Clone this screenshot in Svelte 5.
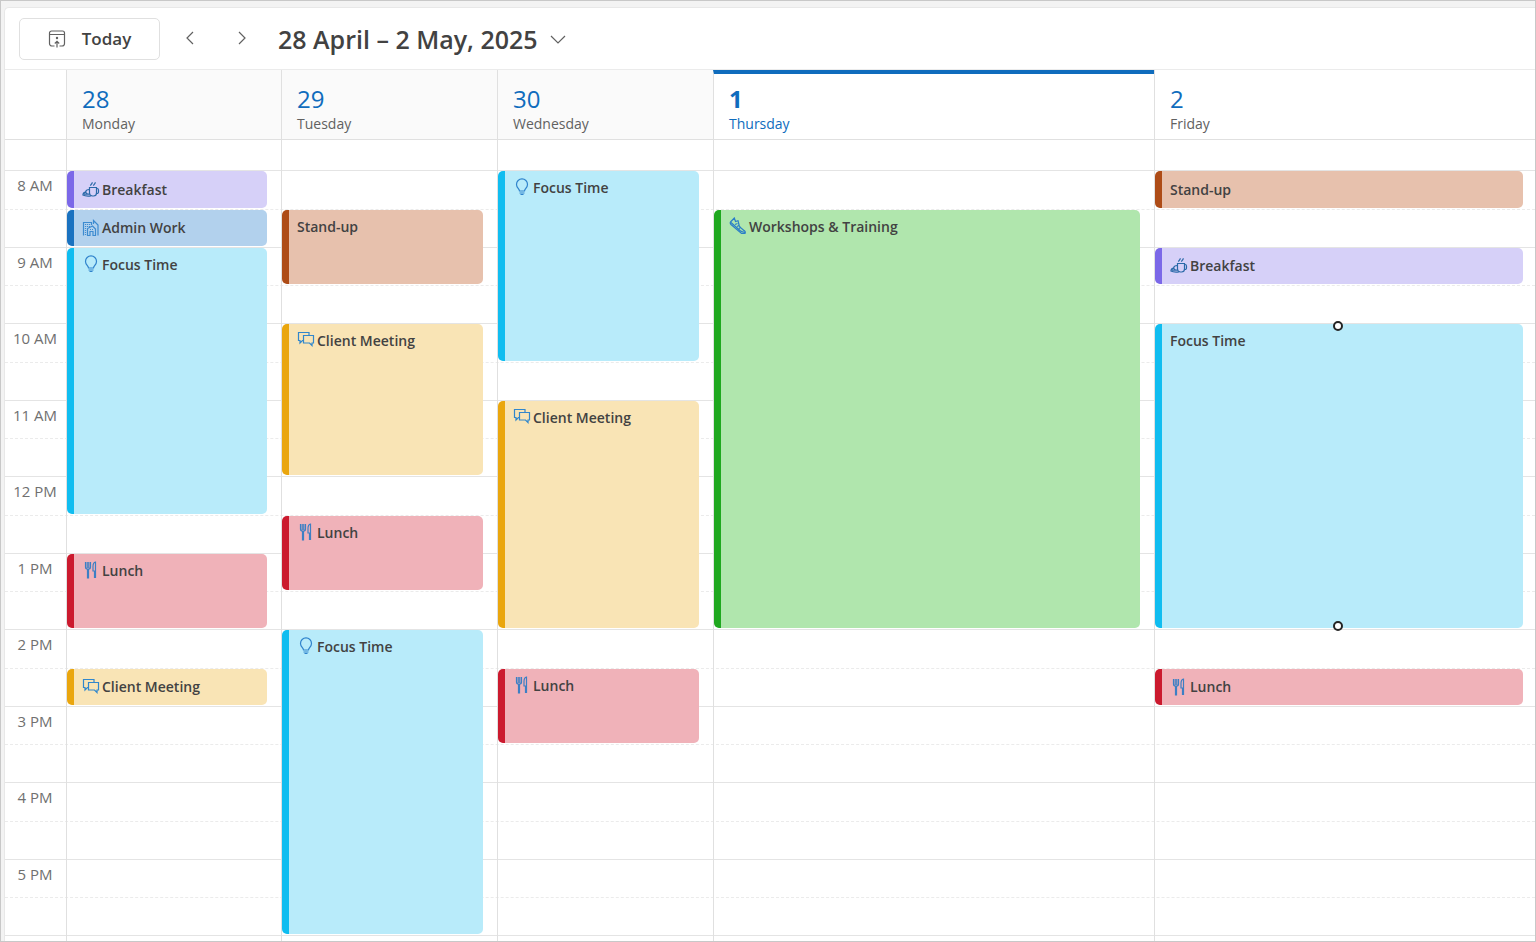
<script lang="ts">
	type IconName = 'breakfast' | 'building' | 'bulb' | 'chat' | 'utensils' | 'shoe'

	interface CalendarEvent {
		title: string
		start: number
		end: number
		color: string
		icon?: IconName
		selected?: boolean
	}

	interface Day {
		date: number
		name: string
		past?: boolean
		today?: boolean
		events: CalendarEvent[]
	}

	const days: Day[] = [
		{
			date: 28,
			name: 'Monday',
			past: true,
			events: [
				{ title: 'Breakfast', start: 8, end: 8.5, color: 'purple', icon: 'breakfast' },
				{ title: 'Admin Work', start: 8.5, end: 9, color: 'blue', icon: 'building' },
				{ title: 'Focus Time', start: 9, end: 12.5, color: 'cyan', icon: 'bulb' },
				{ title: 'Lunch', start: 13, end: 14, color: 'red', icon: 'utensils' },
				{ title: 'Client Meeting', start: 14.5, end: 15, color: 'yellow', icon: 'chat' },
			],
		},
		{
			date: 29,
			name: 'Tuesday',
			past: true,
			events: [
				{ title: 'Stand-up', start: 8.5, end: 9.5, color: 'brown' },
				{ title: 'Client Meeting', start: 10, end: 12, color: 'yellow', icon: 'chat' },
				{ title: 'Lunch', start: 12.5, end: 13.5, color: 'red', icon: 'utensils' },
				{ title: 'Focus Time', start: 14, end: 18, color: 'cyan', icon: 'bulb' },
			],
		},
		{
			date: 30,
			name: 'Wednesday',
			past: true,
			events: [
				{ title: 'Focus Time', start: 8, end: 10.5, color: 'cyan', icon: 'bulb' },
				{ title: 'Client Meeting', start: 11, end: 14, color: 'yellow', icon: 'chat' },
				{ title: 'Lunch', start: 14.5, end: 15.5, color: 'red', icon: 'utensils' },
			],
		},
		{
			date: 1,
			name: 'Thursday',
			today: true,
			events: [
				{ title: 'Workshops & Training', start: 8.5, end: 14, color: 'green', icon: 'shoe' },
			],
		},
		{
			date: 2,
			name: 'Friday',
			events: [
				{ title: 'Stand-up', start: 8, end: 8.5, color: 'brown' },
				{ title: 'Breakfast', start: 9, end: 9.5, color: 'purple', icon: 'breakfast' },
				{ title: 'Focus Time', start: 10, end: 14, color: 'cyan', selected: true },
				{ title: 'Lunch', start: 14.5, end: 15, color: 'red', icon: 'utensils' },
			],
		},
	]

	const hours = [8, 9, 10, 11, 12, 13, 14, 15, 16, 17]

	const hourLabel = (hour: number) => `${hour > 12 ? hour - 12 : hour} ${hour < 12 ? 'AM' : 'PM'}`

	// row 1 is the tail of 7:30, every row after it is half an hour
	const row = (time: number) => (time - 8) * 2 + 2
</script>

{#snippet icon(name: IconName)}
	<svg width="18" height="18" viewBox="0 0 18 18" aria-hidden="true">
		{#if name === 'breakfast'}
			<g stroke="#2a69a8">
				<path d="M7.500 6.500h7v5.500a3 3 0 0 1-3 3h-1a3 3 0 0 1-3-3z" />
				<path d="M14.500 7.500h.5a1.500 1.500 0 0 1 1.500 1.500v2a1.500 1.500 0 0 1-1.500 1.500h-.5" />
				<path d="M8.500 4.800c0-1.800 1.800-1.400 1.800-3.600M11.500 4.800c0-1.800 1.800-1.400 1.800-3.600" />
				<path d="M7.300 8.500c-2.300.1-3.500.9-3.800 2.600-1.300.2-2.400 1.200-2.600 2.900 1.600.9 5.300 1.200 8 .9M3.500 11.200l2 2H2M5.500 13.200h2" />
			</g>
		{:else if name === 'building'}
			<g stroke="#3d8bd0">
				<path d="M1.500 16.500V3.500h8V6M11.500 5V1.500l4.500 4.500v10.500M5.500 16.500V9.500l5-2.500 3 3v6.500h-2.500v-4H8v4z" />
				<path d="M3.500 5v11M5.500 5v4M7.500 5v3M8 10.500h4" stroke-dasharray="1 1" />
			</g>
		{:else if name === 'bulb'}
			<g stroke="#2f83cc">
				<path d="M6.500 13C6.300 10.700 3.500 9.700 3.500 6.400a5.500 5.500 0 0 1 11 0c0 3.300-2.800 4.300-3 6.600z" />
				<path d="M6.500 15h5M7.500 16.500h3" />
			</g>
		{:else if name === 'chat'}
			<g stroke="#3287cc">
				<path d="M6 9.500H5.500L3 12V9.500H1.500v-8h10.500V4" />
				<path d="M6.500 4.500h10v7.500h-1.500v2.500L12.500 12h-6z" />
			</g>
		{:else if name === 'utensils'}
			<g stroke="#3c7fc4">
				<path d="M3.500 1v5a2 2 0 0 0 2 2h1a2 2 0 0 0 2-2V1M5.200 1v6M6.800 1v6M5.500 8v9h1V8" />
				<path d="M13.500 1.200c-2 .3-2.500 2.300-2.500 4.300v4.500h1.500v6.500h1z" />
			</g>
		{:else}
			<g stroke="#2a7ec8">
				<path d="M1.500 5L5.300 1l1.200 3.500 2.500-.8 1.300 5.300c1 1.800 3.700 3.500 5.200 4.800 1 .9 1 1.700.5 2.700h-3.500L2 7.500c-.8-.9-1-1.700-.5-2.500z" />
				<path d="M2 5.500l9.500 8.500c1 .9 2.500 1.300 4.500 1.300M6 7.500l2.500-1M8 9.500l2-1M10 11.500l1.500-1" />
			</g>
		{/if}
	</svg>
{/snippet}

<div class="frame">
	<main class="calendar">
		<header class="toolbar">
			<button class="today-button">
				<svg width="18" height="18" viewBox="0 0 18 18" aria-hidden="true">
					<path d="M6.500 16H4a2.500 2.500 0 0 1-2.500-2.500V3A2 2 0 0 1 3.500 1h11a2 2 0 0 1 2 2v10.500A2.500 2.500 0 0 1 14 16h-2.500M1.500 4.500h15" />
					<path d="M9 17.500V12M6.800 13.500L9 11.300l2.200 2.200" />
					<circle cx="9" cy="8" r="1.200" class="dot" />
				</svg>
				Today
			</button>
			<button class="arrow" aria-label="Previous week">
				<svg width="16" height="16" viewBox="0 0 16 16"><path d="M11 1L5 7l6 6" /></svg>
			</button>
			<button class="arrow" aria-label="Next week">
				<svg width="16" height="16" viewBox="0 0 16 16"><path d="M5 1l6 6-6 6" /></svg>
			</button>
			<button class="range">
				28 April – 2 May, 2025
				<svg width="16" height="16" viewBox="0 0 16 16" aria-hidden="true"><path d="M1 5l7 7 7-7" /></svg>
			</button>
		</header>

		<div class="columns day-headers">
			<div></div>
			{#each days as day}
				<div class="day-header" class:past={day.past} class:today={day.today}>
					<span class="date">{day.date}</span>
					<span class="name">{day.name}</span>
				</div>
			{/each}
		</div>

		<div class="columns body">
			<div class="lines rows">
				{#each hours as hour}
					<div class="hour" style:grid-row={row(hour)}>
						<span>{hourLabel(hour)}</span>
					</div>
					<div class="half" style:grid-row={row(hour + 0.5)}></div>
				{/each}
				<div class="hour" style:grid-row={row(18)}></div>
			</div>
			{#each days as day, i}
				<div class="day rows" style:grid-column={i + 2}>
					{#each day.events as event}
						<button
							class="event {event.color}"
							class:short={event.end - event.start <= 0.5}
							style:grid-row="{row(event.start)} / {row(event.end)}"
						>
							{#if event.icon}
								{@render icon(event.icon)}
							{/if}
							<span>{event.title}</span>
							{#if event.selected}
								<i class="handle top"></i>
								<i class="handle bottom"></i>
							{/if}
						</button>
					{/each}
				</div>
			{/each}
		</div>
	</main>
</div>

<style>
	:global(body) {
		background: #f3f3f3;
	}
	.frame {
		box-sizing: border-box;
		height: 100vh;
		padding: 6px 0 0 3px;
		border: 1px solid #c8c8c8;
		overflow: hidden;
		font-family: 'Open Sans', 'Noto Sans', sans-serif;
		color: #424242;
	}
	.calendar {
		display: flex;
		flex-direction: column;
		box-sizing: border-box;
		height: 100%;
		background: #fff;
		border: 1px solid #e8e8e8;
		border-width: 1px 0 0 1px;
		border-top-left-radius: 5px;
	}
	button {
		font: inherit;
		color: inherit;
		background: none;
		border: none;
		padding: 0;
		cursor: pointer;
	}
	svg {
		display: block;
		flex: none;
		fill: none;
		stroke: #616161;
		stroke-width: 1.2;
	}

	.toolbar {
		display: flex;
		align-items: center;
		box-sizing: border-box;
		height: 62px;
		padding: 0 14px;
		border-bottom: 1px solid #ebebeb;
	}
	.today-button {
		display: flex;
		align-items: center;
		justify-content: center;
		gap: 16px;
		box-sizing: border-box;
		width: 141px;
		height: 42px;
		border: 1px solid #e0e0e0;
		border-radius: 5px;
		font-size: 17px;
		font-weight: 600;
	}
	.dot {
		fill: #616161;
		stroke: none;
	}
	.arrow {
		display: flex;
		margin-left: 22px;
	}
	.arrow + .arrow {
		margin-left: 36px;
	}
	.range {
		display: flex;
		align-items: center;
		gap: 12px;
		margin-left: 28px;
		font-size: 25px;
		font-weight: 600;
	}

	.columns {
		display: grid;
		grid-template-columns: 61px 215fr 216fr 216fr 441fr 381fr;
	}
	.day-headers {
		flex: none;
		height: 69px;
		border-bottom: 1px solid #e0e0e0;
	}
	.day-header {
		display: flex;
		flex-direction: column;
		padding: 14px 15px 0;
		border-left: 1px solid #e0e0e0;
	}
	.past {
		background: #fafafa;
	}
	.date {
		font-size: 24px;
		line-height: 30px;
		color: #0f6cbd;
	}
	.name {
		font-size: 14px;
		line-height: 20px;
		color: #616161;
	}
	.today {
		padding-top: 10px;
		border-top: 4px solid #0f6cbd;
	}
	.today .date {
		font-weight: 700;
	}
	.today .name {
		color: #0f6cbd;
	}

	.body {
		flex: 1;
		min-height: 0;
		overflow: hidden;
	}
	.rows {
		display: grid;
		grid-template-rows: 30px repeat(5, 39px 38px 38px 38px) 38px;
	}
	.lines {
		grid-area: 1 / 1 / 2 / -1;
	}
	.hour {
		border-top: 1px solid #e4e4e4;
	}
	.hour span {
		display: block;
		width: 60px;
		padding-top: 4px;
		font-size: 15px;
		line-height: 20px;
		text-align: center;
		color: #707070;
	}
	.half {
		border-top: 1px dashed #ebebeb;
	}
	.day {
		grid-row: 1;
		padding-right: 14px;
		border-left: 1px solid #e0e0e0;
	}
	.day:last-child {
		padding-right: 12px;
	}

	.event {
		position: relative;
		display: flex;
		align-items: flex-start;
		gap: 2px;
		margin: 1px 0;
		padding: 7px 8px;
		border-left: 7px solid;
		border-radius: 5px;
		font-size: 14px;
		font-weight: 600;
		line-height: 20px;
		text-align: left;
	}
	.event.short {
		align-items: center;
		padding-block: 0;
	}
	.purple {
		background: #d6d0f8;
		border-color: #7b68e8;
	}
	.blue {
		background: #b2d1ed;
		border-color: #1a72c0;
	}
	.cyan {
		background: #b8ebfa;
		border-color: #10bdf0;
	}
	.red {
		background: #f0b2b9;
		border-color: #cb1a2e;
	}
	.yellow {
		background: #f9e4b5;
		border-color: #eaa60e;
	}
	.brown {
		background: #e7c1ad;
		border-color: #ae4c17;
	}
	.green {
		background: #b0e6ad;
		border-color: #1fa81f;
	}
	.handle {
		position: absolute;
		left: 50%;
		box-sizing: border-box;
		width: 10px;
		height: 10px;
		margin-left: -10px;
		border: 2px solid #242424;
		border-radius: 50%;
		background: #fff;
	}
	.top {
		top: -3px;
	}
	.bottom {
		bottom: -3px;
	}
</style>
